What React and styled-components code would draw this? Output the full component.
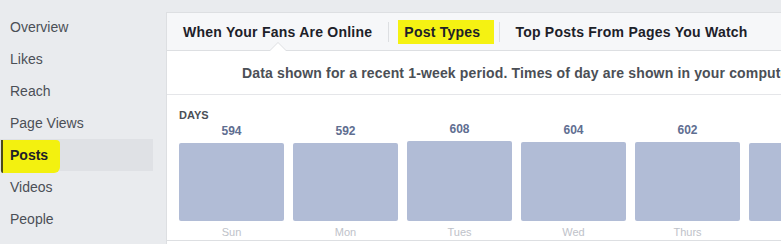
import React from "react";
import styled, { createGlobalStyle } from "styled-components";

const GlobalStyle = createGlobalStyle`
  html, body {
    margin: 0;
    padding: 0;
    background: #e9ebee;
    font-family: "Liberation Sans", Arial, Helvetica, sans-serif;
    overflow: hidden;
  }
`;

const Page = styled.div`
  display: flex;
  width: 781px;
  height: 244px;
  overflow: hidden;
  background: #e9ebee;
`;

const Sidebar = styled.nav`
  flex: 0 0 166px;
  padding-top: 11px;
  display: flex;
  flex-direction: column;
`;

const NavItem = styled.div`
  position: relative;
  width: 153px;
  height: 32px;
  box-sizing: border-box;
  padding-left: 10px;
  display: flex;
  align-items: center;
  font-size: 14px;
  color: ${(p) => (p.active ? "#1d2129" : "#4b4f56")};
  font-weight: ${(p) => (p.active ? "bold" : "normal")};
  background: ${(p) => (p.active ? "#dfe1e5" : "transparent")};
`;

const Marker = styled.span`
  position: absolute;
  left: 1px;
  top: 1px;
  width: 59px;
  height: 33px;
  background: #f3f10f;
  border-left: 2px solid #4a4a1c;
  border-radius: 0 4px 6px 2px;
  box-sizing: border-box;
`;

const NavLabel = styled.span`
  position: relative;
`;

const Panel = styled.section`
  flex: 0 0 720px;
  margin-top: 12px;
  background: #fff;
  border: 1px solid #dddfe2;
  border-right: none;
  border-bottom: none;
  display: flex;
  flex-direction: column;
  box-sizing: border-box;
`;

const Tabs = styled.div`
  height: 37px;
  flex: 0 0 37px;
  display: flex;
  align-items: center;
  background: #f6f7f9;
  border-bottom: 1px solid #dddfe2;
`;

const Tab = styled.div`
  position: relative;
  height: 100%;
  display: flex;
  align-items: center;
  padding: 0 ${(p) => p.right || 16}px 0 ${(p) => p.left || 16}px;
  font-size: 14px;
  font-weight: bold;
  letter-spacing: 0.24px;
  color: #1d2129;
  white-space: nowrap;

  ${(p) =>
    p.active &&
    `
    &::before, &::after {
      content: "";
      position: absolute;
      left: 50%;
      bottom: -1px;
      transform: translateX(-50%);
      border-style: solid;
      border-color: transparent;
    }
    &::before {
      border-width: 0 9px 9px;
      border-bottom-color: #dddfe2;
    }
    &::after {
      border-width: 0 8px 8px;
      border-bottom-color: #fff;
    }
  `}
`;

const Highlight = styled.span`
  background: ${(p) => (p.on ? "#f5f212" : "transparent")};
  padding: 4px 14px 4px 6px;
  margin-left: -6px;
  margin-right: -14px;
`;

const Sep = styled.span`
  width: 1px;
  height: 20px;
  background: #dddfe2;
`;

const Info = styled.div`
  height: 43px;
  flex: 0 0 43px;
  display: flex;
  align-items: center;
  padding-left: 75px;
  border-bottom: 1px solid #e5e6e9;
  font-size: 14px;
  font-weight: bold;
  letter-spacing: 0.15px;
  color: #4b4f56;
  white-space: nowrap;
`;

const Chart = styled.div`
  padding: 14px 0 0 12px;
  height: 146px;
  flex: 0 0 146px;
  box-sizing: border-box;
  border-bottom: 1px solid #dddfe2;
`;

const ChartTitle = styled.div`
  font-size: 11px;
  font-weight: bold;
  color: #4b4f56;
  line-height: 12px;
`;

const Bars = styled.div`
  display: flex;
  gap: 9px;
  align-items: flex-end;
  height: 117px;
`;

const Column = styled.div`
  flex: 0 0 105px;
  display: flex;
  flex-direction: column;
  align-items: center;
`;

const Value = styled.div`
  font-size: 12px;
  font-weight: bold;
  color: #5f6e91;
  line-height: 14px;
  margin-bottom: 5px;
`;

const Bar = styled.div`
  width: 100%;
  background: #b1bcd6;
  border-radius: 2px;
`;

const Day = styled.div`
  font-size: 11px;
  color: #bec2c9;
  line-height: 12px;
  margin-top: 5px;
`;

const nav = ["Overview", "Likes", "Reach", "Page Views", "Posts", "Videos", "People"];

const days = [
  { day: "Sun", value: 594 },
  { day: "Mon", value: 592 },
  { day: "Tues", value: 608 },
  { day: "Wed", value: 604 },
  { day: "Thurs", value: 602 },
  { day: "Fri", value: 596 },
];

export default function App() {
  return (
    <Page>
      <GlobalStyle />
      <Sidebar>
        {nav.map((n) => (
          <NavItem key={n} active={n === "Posts"}>
            {n === "Posts" && <Marker />}
            <NavLabel>{n}</NavLabel>
          </NavItem>
        ))}
      </Sidebar>
      <Panel>
        <Tabs>
          <Tab active>When Your Fans Are Online</Tab>
          <Sep />
          <Tab left={15} right={19}>
            <Highlight on>Post Types</Highlight>
          </Tab>
          <Sep />
          <Tab left={15}>Top Posts From Pages You Watch</Tab>
        </Tabs>
        <Info>
          Data shown for a recent 1-week period. Times of day are shown in your computer's time zone.
        </Info>
        <Chart>
          <ChartTitle>DAYS</ChartTitle>
          <Bars>
            {days.map((d) => (
              <Column key={d.day}>
                <Value>{d.value}</Value>
                <Bar style={{ height: `${(d.value / 608) * 80}px` }} />
                <Day>{d.day}</Day>
              </Column>
            ))}
          </Bars>
        </Chart>
      </Panel>
    </Page>
  );
}
